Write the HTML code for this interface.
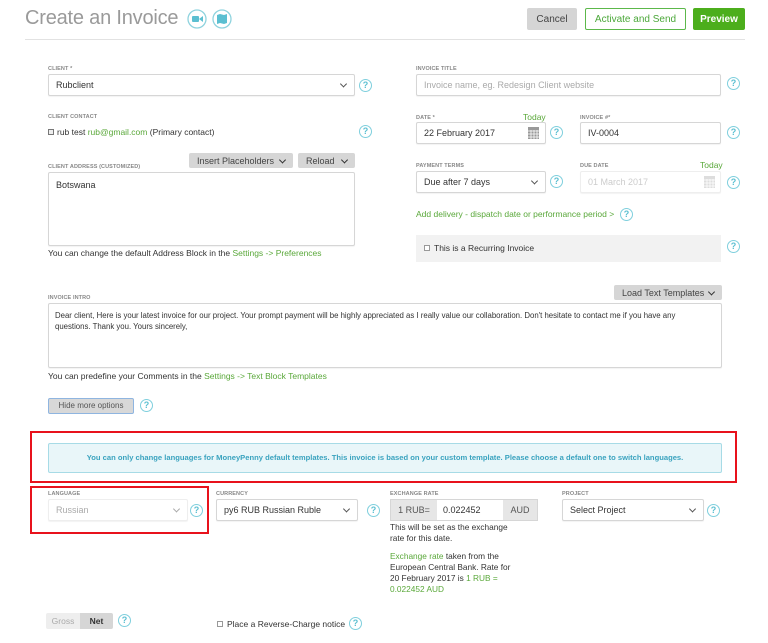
<!DOCTYPE html>
<html><head><meta charset="utf-8"><style>
*{box-sizing:border-box;margin:0;padding:0}
body{width:768px;height:643px;background:#fff;font-family:"Liberation Sans",sans-serif;color:#333;position:relative;overflow:hidden;font-size:9px}
.a{position:absolute}
.lbl{position:absolute;font-size:5.5px;font-weight:bold;color:#888;text-transform:uppercase;letter-spacing:.1px}
.inp{position:absolute;border:1px solid #d6d6d6;border-radius:2px;background:#fff;font-size:9px;padding-left:7px;display:flex;align-items:center;box-shadow:0 1px 1px rgba(0,0,0,.05)}
.chev{position:absolute;right:8px;top:50%;width:5px;height:5px;border-right:1.2px solid #555;border-bottom:1.2px solid #555;transform:translateY(-70%) rotate(45deg)}
.q{position:absolute;width:13px;height:13px;border:1.5px solid #7fcfdd;border-radius:50%;color:#5bbfd1;font-size:9px;font-weight:bold;text-align:center;line-height:10px}
.g{color:#5aa83a}
.btn{position:absolute;background:#d6d6d6;font-size:9px;color:#444;display:flex;align-items:center;padding-left:8px;border-radius:2px}
.btn .chev{border-color:#333}
.hb{position:absolute;display:flex;align-items:center;justify-content:center;border-radius:2px;font-size:10px}
</style></head><body>
<div class="a" style="left:25px;top:7px;font-size:20px;color:#9a9a9a;letter-spacing:-0.2px">Create an Invoice</div>
<svg class="a" style="left:187px;top:8px" width="46" height="22"><circle cx="10" cy="11" r="9" fill="none" stroke="#8fd3de" stroke-width="1.3"/><rect x="5" y="8" width="7" height="6" rx="1" fill="#5bbfd1"/><path d="M12 11 L16 8 V14 Z" fill="#5bbfd1"/><circle cx="35" cy="11" r="9" fill="none" stroke="#8fd3de" stroke-width="1.3"/><path d="M30 7 L33 6 L37 7 L40 6 V15 L37 16 L33 15 L30 16Z" fill="#5bbfd1"/></svg>
<div class="a" style="left:25px;top:39px;width:720px;height:1px;background:#e2e2e2"></div>
<div class="hb" style="left:527px;top:8px;width:50px;height:22px;background:#d5d5d5;color:#444">Cancel</div>
<div class="hb" style="left:585px;top:8px;width:101px;height:22px;border:1px solid #5cb84a;color:#4ca83a">Activate and Send</div>
<div class="hb" style="left:693px;top:8px;width:52px;height:22px;background:#4cae1c;color:#fff;font-weight:bold">Preview</div>

<div class="lbl" style="left:48px;top:66px">Client *</div>
<div class="inp" style="left:48px;top:74px;width:307px;height:22px">Rubclient<span class="chev"></span></div>
<div class="q" style="left:359px;top:79px">?</div>
<div class="lbl" style="left:48px;top:114px">Client contact</div>
<div class="a" style="left:48px;top:127px;font-size:8.5px"><span style="display:inline-block;width:6px;height:6px;border:1px solid #777;background:#eee;margin-right:3px"></span>rub test <span class="g">rub@gmail.com</span> (Primary contact)</div>
<div class="q" style="left:359px;top:125px">?</div>
<div class="lbl" style="left:48px;top:164px">Client address (customized)</div>
<div class="btn" style="left:189px;top:153px;width:104px;height:15px">Insert Placeholders<span class="chev"></span></div>
<div class="btn" style="left:298px;top:153px;width:57px;height:15px">Reload<span class="chev"></span></div>
<div class="inp" style="left:48px;top:172px;width:307px;height:74px;align-items:flex-start;padding-top:7px">Botswana</div>
<div class="a" style="left:48px;top:248px;font-size:8.5px">You can change the default Address Block in the <span class="g">Settings -&gt; Preferences</span></div>

<div class="lbl" style="left:416px;top:66px">Invoice title</div>
<div class="inp" style="left:416px;top:74px;width:305px;height:22px;color:#aaa">Invoice name, eg. Redesign Client website</div>
<div class="q" style="left:727px;top:77px">?</div>
<div class="lbl" style="left:416px;top:115px">Date *</div>
<div class="a g" style="left:523px;top:112px;font-size:8.5px">Today</div>
<div class="inp" style="left:416px;top:122px;width:130px;height:22px">22 February 2017</div>
<svg class="a" style="left:527px;top:125px" width="13" height="15"><rect x="1" y="2" width="11" height="12" fill="#999"/><g stroke="#fff" stroke-width=".8"><path d="M1 6H12M1 9H12M1 12H12M4 5V14M7 5V14M10 5V14"/></g></svg>
<div class="q" style="left:550px;top:126px">?</div>
<div class="lbl" style="left:580px;top:115px">Invoice #*</div>
<div class="inp" style="left:580px;top:122px;width:141px;height:22px">IV-0004</div>
<div class="q" style="left:727px;top:126px">?</div>
<div class="lbl" style="left:416px;top:163px">Payment terms</div>
<div class="inp" style="left:416px;top:171px;width:130px;height:22px">Due after 7 days<span class="chev"></span></div>
<div class="q" style="left:550px;top:175px">?</div>
<div class="lbl" style="left:580px;top:163px">Due date</div>
<div class="a g" style="left:700px;top:160px;font-size:8.5px">Today</div>
<div class="inp" style="left:580px;top:171px;width:141px;height:22px;color:#ccc;border-color:#eee">01 March 2017</div>
<svg class="a" style="left:703px;top:174px" width="13" height="15"><rect x="1" y="2" width="11" height="12" fill="#ddd"/><g stroke="#fff" stroke-width=".8"><path d="M1 6H12M1 9H12M1 12H12M4 5V14M7 5V14M10 5V14"/></g></svg>
<div class="q" style="left:727px;top:176px">?</div>
<div class="a g" style="left:416px;top:209px;font-size:8.5px">Add delivery - dispatch date or performance period &gt;</div>
<div class="q" style="left:620px;top:208px">?</div>
<div class="a" style="left:416px;top:235px;width:305px;height:27px;background:#f2f2f2;font-size:8.5px;padding:8px 0 0 8px"><span style="display:inline-block;width:6px;height:6px;border:1px solid #999;background:#fff;margin-right:4px"></span>This is a Recurring Invoice</div>
<div class="q" style="left:727px;top:240px">?</div>

<div class="lbl" style="left:48px;top:295px">Invoice intro</div>
<div class="btn" style="left:614px;top:285px;width:108px;height:15px">Load Text Templates<span class="chev"></span></div>
<div class="inp" style="left:48px;top:303px;width:674px;height:65px;align-items:flex-start;padding:6px 8px 0 6px;font-size:7.8px;line-height:11px">Dear client, Here is your latest invoice for our project. Your prompt payment will be highly appreciated as I really value our collaboration. Don't hesitate to contact me if you have any questions. Thank you. Yours sincerely,</div>
<div class="a" style="left:48px;top:371px;font-size:8.5px">You can predefine your Comments in the <span class="g">Settings -&gt; Text Block Templates</span></div>
<div class="a" style="left:48px;top:398px;width:86px;height:16px;background:#d8d8d8;border:1px solid #8fb5e0;border-radius:2px;font-size:8px;color:#555;text-align:center;line-height:14px">Hide more options</div>
<div class="q" style="left:140px;top:399px">?</div>

<div class="a" style="left:30px;top:431px;width:707px;height:52px;border:2px solid #e8121c"></div>
<div class="a" style="left:48px;top:443px;width:674px;height:30px;background:#e9f6f9;border:1px solid #a7dbe6;border-radius:2px;color:#3aa3bf;font-size:7.6px;font-weight:bold;text-align:center;line-height:28px">You can only change languages for MoneyPenny default templates. This invoice is based on your custom template. Please choose a default one to switch languages.</div>
<div class="a" style="left:30px;top:486px;width:179px;height:48px;border:2px solid #e8121c"></div>
<div class="lbl" style="left:48px;top:491px">Language</div>
<div class="inp" style="left:48px;top:499px;width:140px;height:22px;color:#aaa;border-color:#eee">Russian<span class="chev" style="border-color:#aaa"></span></div>
<div class="q" style="left:190px;top:504px">?</div>
<div class="lbl" style="left:216px;top:491px">Currency</div>
<div class="inp" style="left:216px;top:499px;width:142px;height:22px">py6 RUB Russian Ruble<span class="chev"></span></div>
<div class="q" style="left:367px;top:504px">?</div>
<div class="lbl" style="left:390px;top:491px">Exchange rate</div>
<div class="a" style="left:390px;top:499px;width:148px;height:22px;border:1px solid #d6d6d6;display:flex;font-size:9px;line-height:20px"><div style="width:46px;background:#e6e6e6;text-align:center;color:#555">1 RUB=</div><div style="flex:1;padding-left:6px">0.022452</div><div style="width:34px;background:#e6e6e6;text-align:center;color:#555">AUD</div></div>
<div class="a" style="left:390px;top:522px;font-size:8.3px;line-height:11px;width:125px">This will be set as the exchange rate for this date.</div>
<div class="a" style="left:390px;top:551px;font-size:8.3px;line-height:11px;width:130px"><span class="g">Exchange rate</span> taken from the European Central Bank. Rate for 20 February 2017 is <span class="g">1 RUB = 0.022452 AUD</span></div>
<div class="lbl" style="left:562px;top:491px">Project</div>
<div class="inp" style="left:562px;top:499px;width:142px;height:22px">Select Project<span class="chev"></span></div>
<div class="q" style="left:707px;top:504px">?</div>

<div class="a" style="left:46px;top:613px;width:67px;height:16px;display:flex;font-size:8.5px;line-height:16px;border-radius:2px;overflow:hidden"><div style="width:34px;background:#eee;color:#aaa;text-align:center">Gross</div><div style="flex:1;background:#d6d6d6;font-weight:bold;text-align:center">Net</div></div>
<div class="q" style="left:118px;top:614px">?</div>
<div class="a" style="left:217px;top:619px;font-size:8.5px"><span style="display:inline-block;width:6px;height:6px;border:1px solid #999;margin-right:4px"></span>Place a Reverse-Charge notice</div>
<div class="q" style="left:349px;top:617px">?</div>
</body></html>
